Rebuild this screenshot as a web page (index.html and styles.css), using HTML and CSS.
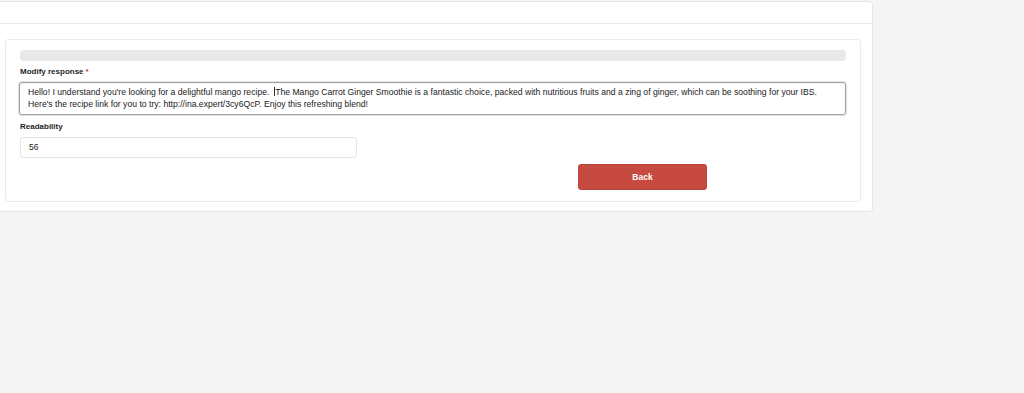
FILE: index.html
```html
<!DOCTYPE html>
<html lang="en">
<head>
<meta charset="utf-8">
<title>Modify response</title>
<link rel="stylesheet" href="styles.css">
</head>
<body>
<div class="panel">
  <div class="panel-header"></div>
  <div class="panel-body">
    <div class="card">
      <div class="skeleton"></div>
      <label class="label">Modify response<span class="req">*</span></label>
      <div class="textarea"><span class="line">Hello! I understand you're looking for a delightful mango recipe.&nbsp; <span class="caret"></span>The Mango Carrot Ginger Smoothie is a fantastic choice, packed with nutritious fruits and a zing of ginger, which can be soothing for your IBS.</span> <span class="line">Here's the recipe link for you to try: http://ina.expert/3cy6QcP. Enjoy this refreshing blend!</span></div>
      <label class="label label-second">Readability</label>
      <div class="input">56</div>
      <div class="actions">
        <button class="btn">Back</button>
      </div>
    </div>
  </div>
</div>
</body>
</html>
```

FILE: styles.css
```css
html, body {
  margin: 0;
  padding: 0;
  background: #f5f5f5;
  font-family: "Liberation Sans", Arial, sans-serif;
  color: #222;
}

.panel {
  width: 873px;
  margin-top: 1px;
  background: #fff;
  border: 1px solid #e6e6e6;
  border-left: none;
  border-radius: 0 4px 4px 0;
  box-sizing: border-box;
}

.panel-header {
  height: 21px;
  border-bottom: 1px solid #ebebeb;
}

.panel-body {
  padding: 15px 11px 9px 5px;
}

.card {
  border: 1px solid #ececec;
  border-radius: 3px;
  padding: 10px 14px 11px 14px;
  display: flex;
  flex-direction: column;
}

.skeleton {
  height: 11px;
  border-radius: 4px;
  background: #e8e8e8;
}

.label {
  font-size: 8px;
  font-weight: bold;
  line-height: 12px;
  color: #1f1f1f;
  margin-top: 5px;
  margin-bottom: 4px;
}

.label-second {
  margin-top: 6px;
}

.req {
  color: #d0342c;
  margin-left: 2px;
}

.textarea {
  border: 1px solid #9ea3a3;
  border-radius: 3px;
  box-shadow: 0 0 0 1px #dfe2e2, inset 0 1px 1px rgba(0,0,0,0.06);
  padding: 3px 8px 4px 8px;
  font-size: 8.65px;
  line-height: 12px;
  color: #222;
  margin-left: -1px;
}

.line {
  display: block;
  white-space: nowrap;
}

.caret {
  display: inline-block;
  width: 1px;
  height: 9px;
  background: #333;
  vertical-align: -1px;
}

.input {
  width: 337px;
  height: 21px;
  box-sizing: border-box;
  border: 1px solid #e4e4e4;
  border-radius: 3px;
  padding: 0 8px;
  font-size: 8.65px;
  line-height: 19px;
  color: #222;
}

.actions {
  display: flex;
  padding-left: 558px;
  margin-top: 6px;
}

.btn {
  width: 129px;
  height: 26px;
  background: #c74a40;
  border: 1px solid #b9443b;
  border-radius: 3px;
  color: #fff;
  font-family: "Liberation Sans", Arial, sans-serif;
  font-size: 8.5px;
  font-weight: bold;
  padding: 0;
}
```
